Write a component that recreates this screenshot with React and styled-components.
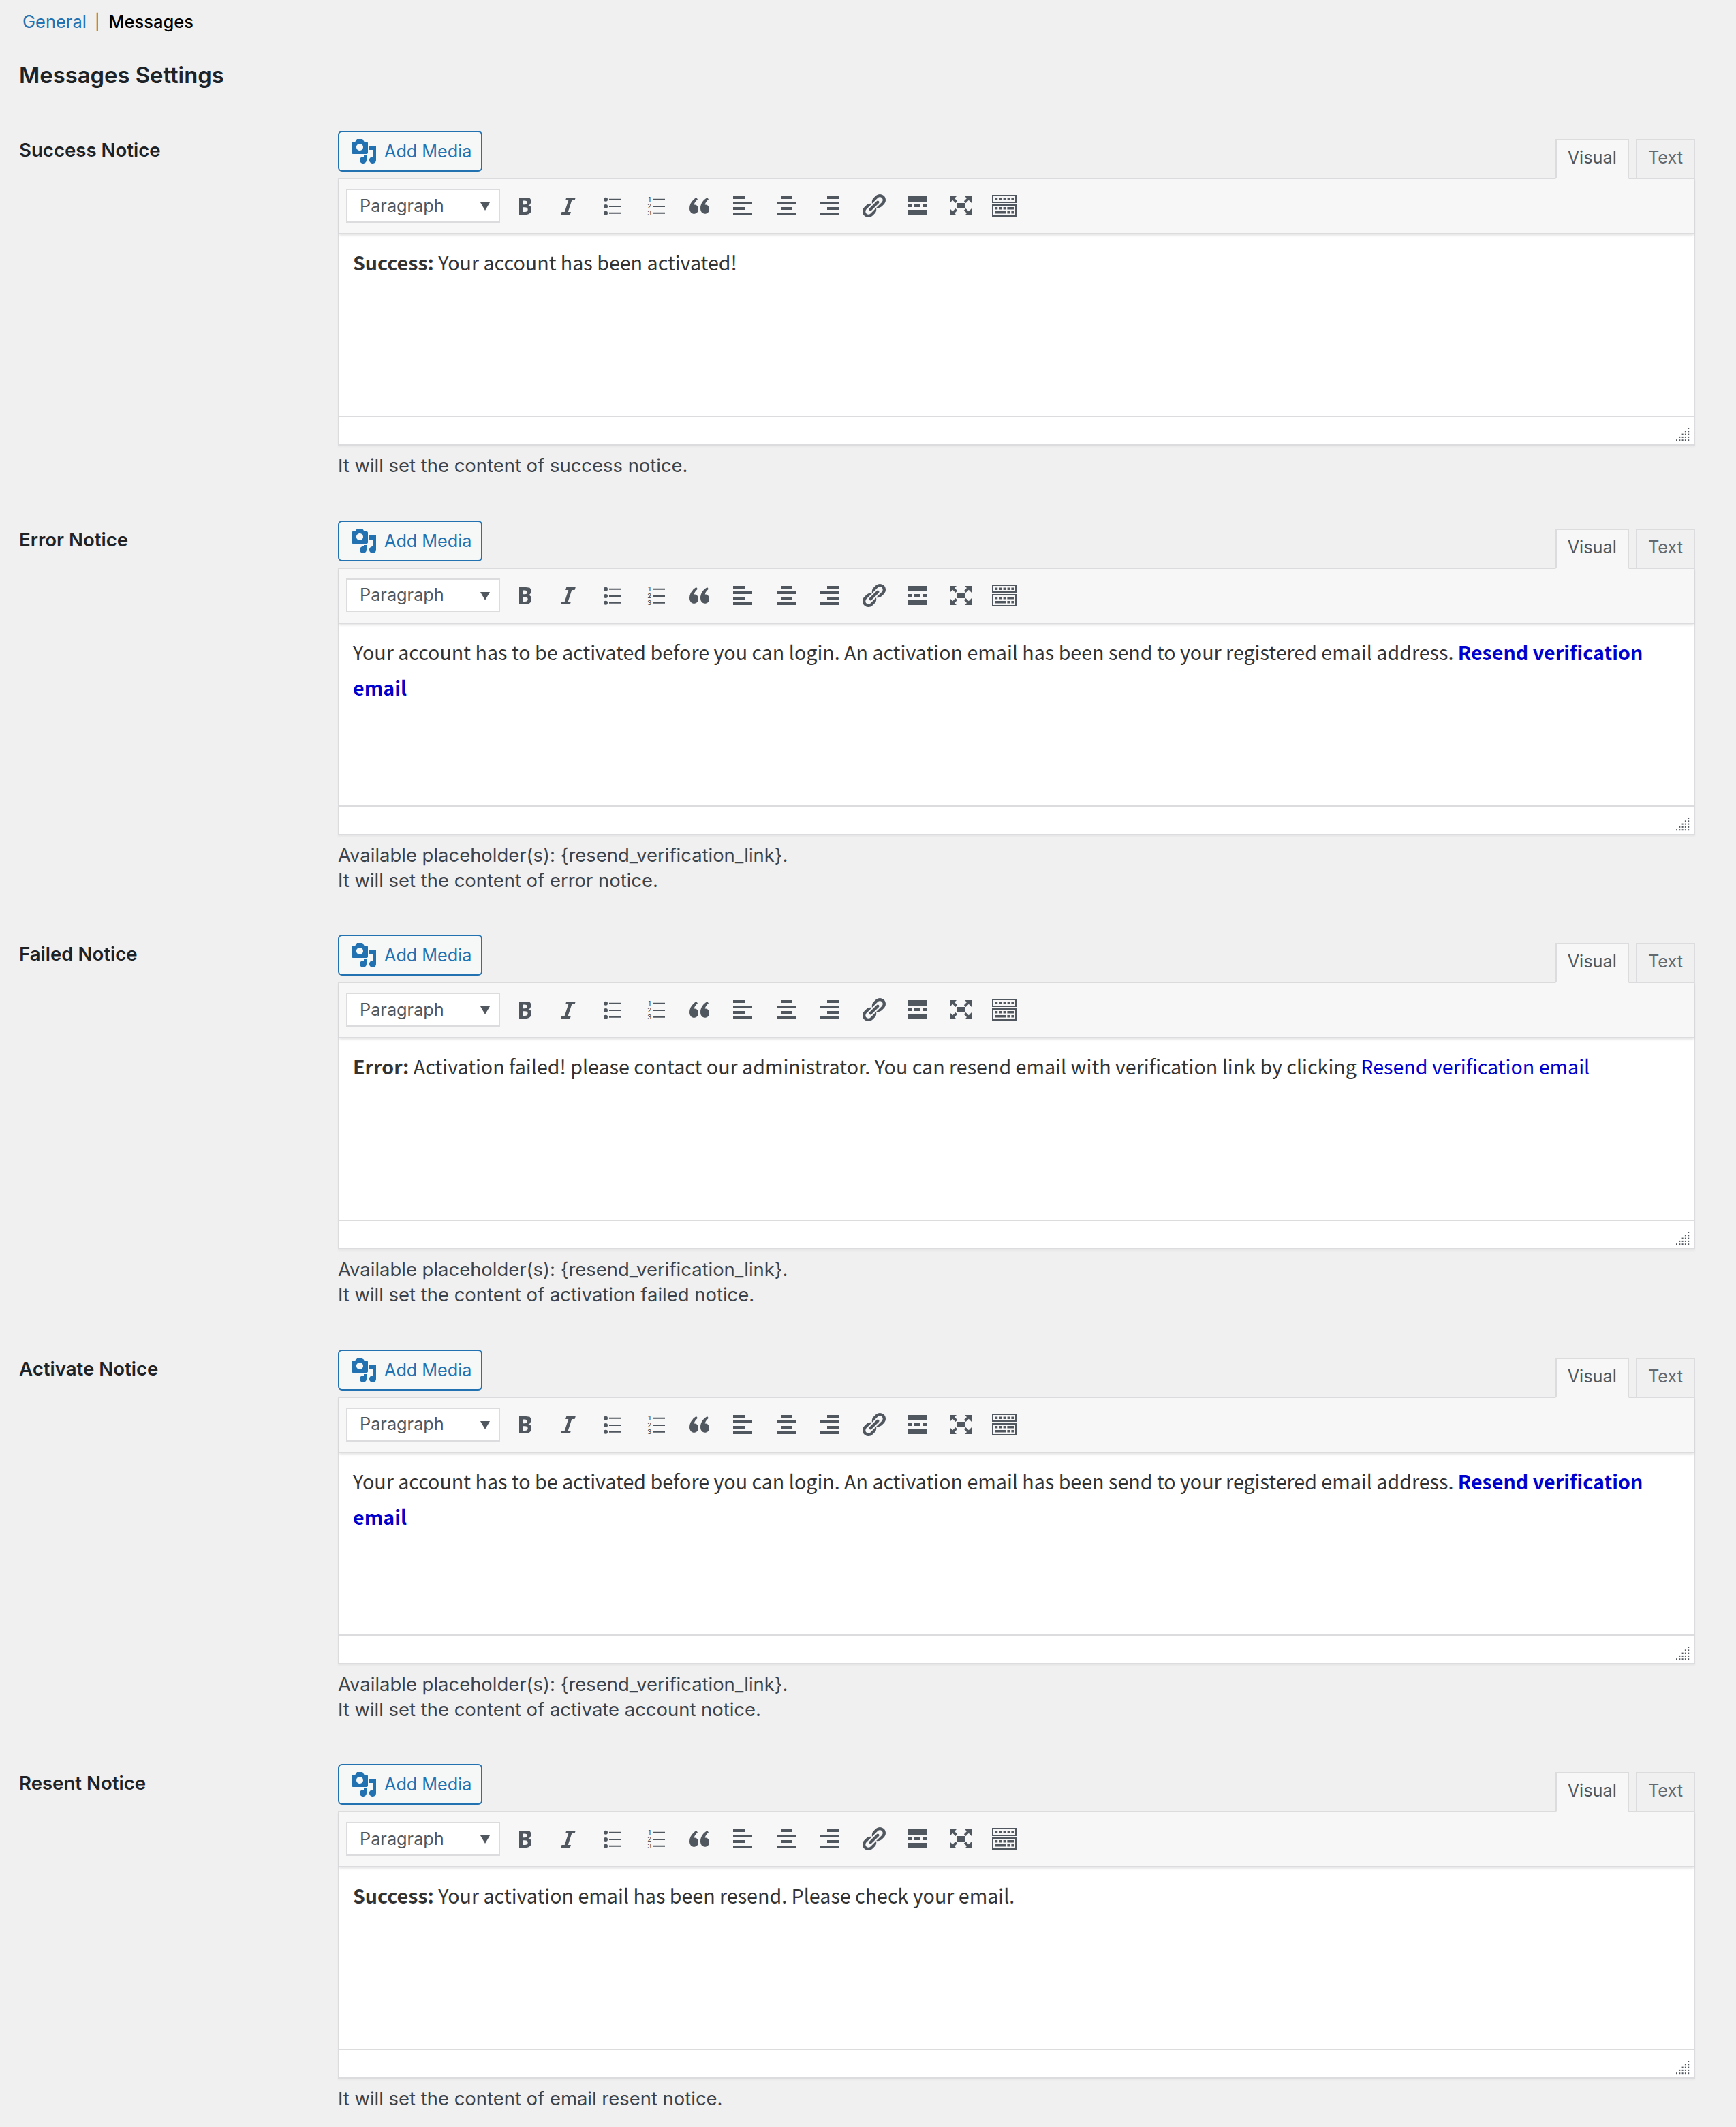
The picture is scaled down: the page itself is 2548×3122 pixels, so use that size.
import React from "react";
import styled, { createGlobalStyle } from "styled-components";

const GlobalStyle = createGlobalStyle`
  html, body { margin: 0; padding: 0; background: #f0f0f1; }
  body { font-family: Inter, "Liberation Sans", sans-serif; color: #1d2327; }
`;

const Page = styled.div`
  width: 2548px;
  height: 3122px;
  box-sizing: border-box;
  padding: 14px 60px 0 28px;
  overflow: hidden;
`;

const SubNav = styled.nav`
  display: flex;
  align-items: center;
  height: 36px;
  padding-left: 5px;
  font-size: 25.5px;
  line-height: 36px;
`;

const NavLink = styled.a`
  color: #2271b1;
  text-decoration: none;
`;

const NavSep = styled.span`
  color: #50575e;
  margin: 0 13px 0 12px;
  font-size: 22px;
`;

const NavCurrent = styled.span`
  color: #000;
  font-weight: 500;
`;

const Title = styled.h2`
  margin: 38px 0 0;
  height: 44px;
  font-size: 32.8px;
  line-height: 44px;
  font-weight: 600;
  color: #1d2327;
`;

const Row = styled.section`
  display: grid;
  grid-template-columns: 468px 1992px;
  margin-top: ${(p) => (p.$first ? "60px" : "0")};
  padding-bottom: 61.5px;
`;

const Label = styled.div`
  font-size: 27.6px;
  font-weight: 600;
  line-height: 36px;
  padding-top: 10px;
  color: #1d2327;
`;

const EditorColumn = styled.div`
  display: flex;
  flex-direction: column;
`;

const EditorTools = styled.div`
  display: flex;
  justify-content: space-between;
  align-items: flex-end;
  height: 69px;
`;

const MediaButton = styled.button`
  display: flex;
  align-items: center;
  align-self: flex-start;
  gap: 10px;
  width: 212px;
  height: 60px;
  box-sizing: border-box;
  padding: 0 0 0 16px;
  background: #f6f7f7;
  border: 2px solid #2271b1;
  border-radius: 6px;
  color: #2271b1;
  font-family: inherit;
  font-size: 25.2px;
  white-space: nowrap;
`;

const EditorTabs = styled.div`
  display: flex;
  gap: 10px;
  margin-bottom: -2px;
  position: relative;
  z-index: 1;
`;

const EditorTab = styled.div`
  height: 59px;
  box-sizing: border-box;
  padding: 0 16px;
  line-height: 50px;
  font-size: 25.3px;
  color: ${(p) => (p.$active ? "#50575e" : "#646970")};
  background: ${(p) => (p.$active ? "#f7f7f8" : "#f0f0f1")};
  border: 2px solid #dcdcde;
  border-bottom-color: ${(p) => (p.$active ? "#f7f7f8" : "#dcdcde")};
`;

const EditorBox = styled.div`
  position: relative;
  height: 393px;
  box-sizing: border-box;
  border: 2px solid #dcdcde;
  background: #fff;
  display: flex;
  flex-direction: column;
  box-shadow: 0 2px 2px rgba(0, 0, 0, 0.04);
`;

const Toolbar = styled.div`
  display: flex;
  align-items: center;
  height: 81px;
  flex: none;
  box-sizing: border-box;
  padding: 0 0 1px 10px;
  background: #f7f7f8;
  border-bottom: 2px solid #dcdcde;
  box-shadow: 0 2px 3px rgba(0, 0, 0, 0.1);
  position: relative;
`;

const FormatSelect = styled.div`
  display: flex;
  align-items: center;
  justify-content: space-between;
  width: 226px;
  height: 50px;
  box-sizing: border-box;
  margin-right: 6px;
  padding: 0 13px 2px 18px;
  background: #fff;
  border: 2px solid #dcdcde;
  color: #50575e;
  font-size: 25.3px;
`;

const Caret = styled.i`
  width: 0;
  height: 0;
  margin-top: 4px;
  border-left: 7.5px solid transparent;
  border-right: 7.5px solid transparent;
  border-top: 12px solid #50575e;
`;

const ToolButton = styled.div`
  display: flex;
  align-items: center;
  justify-content: center;
  width: 60px;
  height: 60px;
  margin-right: 4px;
  svg { display: block; }
`;

const Content = styled.div`
  flex: 1;
  padding: 15px 20px 0 20px;
  font-family: "Noto Sans CJK SC", "Open Sans", sans-serif;
  font-size: 28.65px;
  line-height: 52px;
  color: #333;
  b { font-weight: 700; }
  a { color: #0000cc; text-decoration: none; }
`;

const StatusBar = styled.div`
  height: 40px;
  flex: none;
  border-top: 2px solid #dcdcde;
  background: #fff;
`;

const ResizeHandle = styled.svg`
  position: absolute;
  right: 6px;
  bottom: 4px;
`;

const Description = styled.div`
  margin-top: 11px;
  font-size: 27.45px;
  line-height: 37px;
  color: #3c434a;
`;

const Icon = ({ children, fill = "#50575e", size = 40 }) => (
  <svg width={size} height={size} viewBox="0 0 20 20" fill={fill} aria-hidden="true">
    {children}
  </svg>
);

const MediaIcon = () => (
  <Icon fill="#2271b1">
    <path d="M13 11V4c0-.55-.45-1-1-1h-1.67L9 1H5L3.67 3H2c-.55 0-1 .45-1 1v7c0 .55.45 1 1 1h10c.55 0 1-.45 1-1zM7 4.5c1.38 0 2.5 1.12 2.5 2.5S8.38 9.5 7 9.5 4.5 8.38 4.5 7 5.62 4.5 7 4.5zM14 6h5v10.5c0 1.38-1.12 2.5-2.5 2.5S14 17.88 14 16.5s1.12-2.5 2.5-2.5c.17 0 .34.02.5.05V9h-3V6zm-4 8.05V13h2v3.5c0 1.38-1.12 2.5-2.5 2.5S7 17.88 7 16.5 8.12 14 9.5 14c.17 0 .34.02.5.05z" />
  </Icon>
);

const BoldIcon = () => (
  <Icon>
    <path fillRule="evenodd" d="M6 4v12.5h4.54c1.37 0 2.46-.33 3.26-1 .8-.66 1.2-1.58 1.2-2.77 0-.84-.17-1.51-.51-2.01s-.9-.85-1.67-1.03v-.09c.57-.1 1.02-.4 1.36-.9s.51-1.13.51-1.91c0-1.14-.39-1.98-1.17-2.5C12.75 4.26 11.5 4 9.78 4H6zm2.57 4.9V6.26h1.36c.73 0 1.27.11 1.61.32.34.22.51.58.51 1.07 0 .54-.16.92-.47 1.15s-.82.35-1.51.35h-1.5zm0 2.19h1.6c1.44 0 2.16.53 2.16 1.61 0 .6-.17 1.05-.51 1.34s-.86.43-1.57.43H8.57v-3.38z" />
  </Icon>
);

const ItalicIcon = () => (
  <Icon>
    <path d="M14.78 6h-2.13l-2.8 8.5h2.12l-.62 2H4.6l.62-2h2.14l2.8-8.5H8.03l.62-2h6.75z" />
  </Icon>
);

const ListLines = () => <path d="M8 4.85h9v1H8zM8 10h9v1H8zM8 14.85h9v1H8z" />;

const ListIcon = () => (
  <Icon>
    <circle cx="5.5" cy="5.35" r="1.5" />
    <circle cx="5.5" cy="10.5" r="1.5" />
    <circle cx="5.5" cy="15.35" r="1.5" />
    <ListLines />
  </Icon>
);

const OrderedIcon = () => (
  <Icon>
    <ListLines />
    <text x="5.6" y="7" fontSize="4.8" fontWeight="500" fontFamily="Inter, sans-serif" textAnchor="middle">1</text>
    <text x="5.6" y="12.2" fontSize="4.8" fontWeight="500" fontFamily="Inter, sans-serif" textAnchor="middle">2</text>
    <text x="5.6" y="17" fontSize="4.8" fontWeight="500" fontFamily="Inter, sans-serif" textAnchor="middle">3</text>
  </Icon>
);

const quoteMark = "M9.5 12.6c0 1.9-1.4 3.3-3.2 3.3C4.3 15.9 3 14.3 3 11.8 3 8.6 5 5.7 8 4l1 1.3C7.5 6.5 6.5 8 6.4 9.4c.2 0 .4-.1.6-.1 1.4 0 2.5 1.5 2.5 3.3z";

const QuoteIcon = () => (
  <Icon>
    <path d={quoteMark} />
    <path d={quoteMark} transform="translate(8 0)" />
  </Icon>
);

const AlignIcon = ({ side }) => {
  const short = side === "left" ? [3, 9] : side === "center" ? [6, 8] : [8, 9];
  return (
    <Icon>
      <rect x={short[0]} y="3" width={short[1]} height="2" />
      <rect x="3" y="7" width="14" height="2" />
      <rect x={short[0]} y="11" width={short[1]} height="2" />
      <rect x="3" y="15" width="14" height="2" />
    </Icon>
  );
};

const LinkIcon = () => (
  <Icon>
    <path d="M17.74 2.76c1.68 1.69 1.68 4.41 0 6.1l-1.53 1.52c-1.12 1.12-2.7 1.47-4.14 1.09l2.62-2.61.76-.77.76-.76c.84-.84.84-2.2 0-3.04-.84-.85-2.2-.85-3.04 0l-.77.76-3.38 3.38c-.37-1.44-.02-3.02 1.1-4.14l1.52-1.53c1.69-1.68 4.42-1.68 6.1 0zM8.59 13.43l5.34-5.34c.42-.42.42-1.1 0-1.52-.44-.43-1.13-.39-1.53 0l-5.33 5.34c-.42.42-.42 1.1 0 1.52.44.43 1.13.39 1.52 0zm-.76 2.29l4.14-4.15c.38 1.44.03 3.02-1.09 4.14l-1.52 1.53c-1.69 1.68-4.41 1.68-6.1 0-1.68-1.68-1.68-4.42 0-6.1l1.53-1.52c1.12-1.12 2.7-1.47 4.14-1.1l-4.14 4.15c-.85.84-.85 2.2 0 3.05.84.84 2.2.84 3.04 0z" />
  </Icon>
);

const MoreIcon = () => (
  <Icon>
    <path d="M3 3h14v4H3zM3 9h3v2H3zM8 9h4v2H8zM14 9h3v2h-3zM3 13h14v4H3z" />
  </Icon>
);

const arrowHead = "M2 3h5L5.5 4.5 7.6 6.6 6.2 8 4.1 5.9 2 8z";

const FullscreenIcon = () => (
  <Icon>
    <path d="M7 8h6v4H7z" />
    <path d={arrowHead} />
    <path d={arrowHead} transform="matrix(-1 0 0 1 20 0)" />
    <path d={arrowHead} transform="matrix(1 0 0 -1 0 20)" />
    <path d={arrowHead} transform="matrix(-1 0 0 -1 20 20)" />
  </Icon>
);

const KitchenSinkIcon = () => (
  <Icon>
    <path
      fillRule="evenodd"
      d="M1 2h18v6H1zM2 3v4h16V3zM1 9h18v9H1zM2 10v7h16v-7z"
    />
    <path d="M3.3 4.2h1.8V6H3.3zM6.3 4.2h1.8V6H6.3zM9.3 4.2h1.8V6H9.3zM12.3 4.2h1.8V6h-1.8zM15.2 4.2H17V6h-1.8zM3.3 11h1.8v1.8H3.3zM6.3 11h1.8v1.8H6.3zM9.3 11h1.8v1.8H9.3zM12.2 11H17v1.8h-4.8zM3.3 14h7.8v1.8H3.3zM12.2 14H14v1.8h-1.8zM15.2 14H17v1.8h-1.8z" />
  </Icon>
);

const tools = [
  <BoldIcon />,
  <ItalicIcon />,
  <ListIcon />,
  <OrderedIcon />,
  <QuoteIcon />,
  <AlignIcon side="left" />,
  <AlignIcon side="center" />,
  <AlignIcon side="right" />,
  <LinkIcon />,
  <MoreIcon />,
  <FullscreenIcon />,
  <KitchenSinkIcon />,
];

const gripDots = [];
for (let row = 0; row < 5; row++) {
  for (let col = 4 - row; col < 5; col++) {
    gripDots.push(<rect key={`${row}-${col}`} x={col * 4.3} y={row * 4.3} width="2" height="2" />);
  }
}

const activationCopy = (
  <>
    Your account has to be activated before you can login. An activation email has been send to your registered
    email address.{" "}
    <a href="#resend">
      <b>Resend verification email</b>
    </a>
  </>
);

const placeholder = "Available placeholder(s): {resend_verification_link}.";

const notices = [
  {
    label: "Success Notice",
    body: (
      <>
        <b>Success:</b> Your account has been activated!
      </>
    ),
    desc: ["It will set the content of success notice."],
  },
  {
    label: "Error Notice",
    body: activationCopy,
    desc: [placeholder, "It will set the content of error notice."],
  },
  {
    label: "Failed Notice",
    body: (
      <>
        <b>Error:</b> Activation failed! please contact our administrator. You can resend email with verification
        link by clicking <a href="#resend">Resend verification email</a>
      </>
    ),
    desc: [placeholder, "It will set the content of activation failed notice."],
  },
  {
    label: "Activate Notice",
    body: activationCopy,
    desc: [placeholder, "It will set the content of activate account notice."],
  },
  {
    label: "Resent Notice",
    body: (
      <>
        <b>Success:</b> Your activation email has been resend. Please check your email.
      </>
    ),
    desc: ["It will set the content of email resent notice."],
  },
];

const NoticeEditor = ({ notice, first }) => (
  <Row $first={first}>
    <Label>{notice.label}</Label>
    <EditorColumn>
      <EditorTools>
        <MediaButton>
          <MediaIcon />
          Add Media
        </MediaButton>
        <EditorTabs>
          <EditorTab $active>Visual</EditorTab>
          <EditorTab>Text</EditorTab>
        </EditorTabs>
      </EditorTools>
      <EditorBox>
        <Toolbar>
          <FormatSelect>
            Paragraph
            <Caret />
          </FormatSelect>
          {tools.map((tool, i) => (
            <ToolButton key={i}>{tool}</ToolButton>
          ))}
        </Toolbar>
        <Content>{notice.body}</Content>
        <StatusBar />
        <ResizeHandle width="20" height="20" viewBox="0 0 20 20" fill="#50575e">
          {gripDots}
        </ResizeHandle>
      </EditorBox>
      <Description>
        {notice.desc.map((line) => (
          <div key={line}>{line}</div>
        ))}
      </Description>
    </EditorColumn>
  </Row>
);

const App = () => (
  <Page>
    <GlobalStyle />
    <SubNav>
      <NavLink href="#general">General</NavLink>
      <NavSep>|</NavSep>
      <NavCurrent>Messages</NavCurrent>
    </SubNav>
    <Title>Messages Settings</Title>
    {notices.map((notice, i) => (
      <NoticeEditor key={notice.label} notice={notice} first={i === 0} />
    ))}
  </Page>
);

export default App;
